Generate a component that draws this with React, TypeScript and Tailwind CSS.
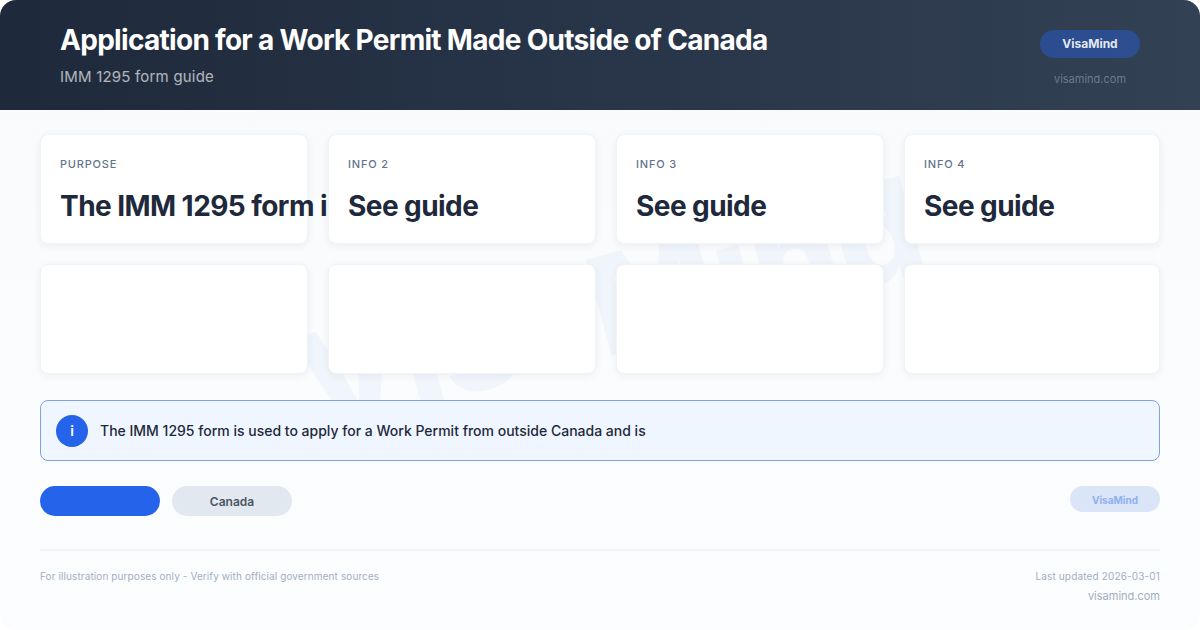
const infoCards = [
  { label: "PURPOSE", value: "The IMM 1295 form is used to apply for a Work Permit from outside Canada and is" },
  { label: "INFO 2", value: "See guide" },
  { label: "INFO 3", value: "See guide" },
  { label: "INFO 4", value: "See guide" },
];

export default function App() {
  return (
    <div className="relative h-[630px] w-[1200px] overflow-hidden rounded-2xl bg-gradient-to-b from-[#f8fafc] to-[#fbfdff] font-['Inter',sans-serif]">
      {/* watermark */}
      <div className="absolute left-[610px] top-[305px] -translate-x-1/2 -translate-y-1/2 -rotate-[15deg] whitespace-nowrap text-[136px] font-extrabold leading-none text-[#2563eb]/[0.04]">
        VisaMind
      </div>

      <header className="relative flex h-[110px] items-start justify-between bg-gradient-to-r from-[#1e293b] to-[#334155] px-[60px]">
        <div>
          <h1 className="mt-[22px] text-[28px] font-bold leading-[36px] tracking-[-0.7px] text-white">
            Application for a Work Permit Made Outside of Canada
          </h1>
          <p className="mt-[8px] text-[15px] leading-[22px] tracking-[0.2px] text-white/65">IMM 1295 form guide</p>
        </div>
        <div className="mt-[30px] flex w-[100px] flex-col items-center">
          <div className="flex h-7 w-[100px] items-center justify-center rounded-full bg-[#2563eb]/40 text-xs font-bold text-[#e2e8f0]">
            VisaMind
          </div>
          <div className="mt-[13px] text-[11px] leading-[16px] text-[#94a3b8]/60">visamind.com</div>
        </div>
      </header>

      <main className="relative flex flex-col px-10 pt-6">
        <div className="grid grid-cols-[268px_268px_268px_256px] gap-5">
          {infoCards.map((card) => (
            <div
              key={card.label}
              className="h-[110px] rounded-lg border border-[#f0f3f7] bg-white pl-[19px] pt-[21px] shadow-[0_2px_8px_rgba(15,23,42,0.06)]"
            >
              <div className="text-[11px] font-medium leading-4 tracking-[0.8px] text-[#64748b]">{card.label}</div>
              <div className="mt-[16px] w-[268px] overflow-hidden whitespace-nowrap text-[28px] font-bold leading-[36px] tracking-[-0.56px] text-[#1e293b]">
                {card.value}
              </div>
            </div>
          ))}
        </div>

        <div className="mt-5 grid grid-cols-[268px_268px_268px_256px] gap-5">
          {infoCards.map((card) => (
            <div
              key={card.label}
              className="h-[110px] rounded-lg border border-[#f0f3f7] bg-white shadow-[0_2px_8px_rgba(15,23,42,0.06)]"
            />
          ))}
        </div>

        <div className="mt-[26px] flex h-[61px] items-center gap-3 rounded-lg border-[1.5px] border-[#7ea3e0] bg-[#eff6ff] pl-[15px]">
          <div className="flex h-8 w-8 items-center justify-center rounded-full bg-[#2563eb] text-sm font-semibold text-white">
            i
          </div>
          <div className="text-sm font-medium text-[#1e293b]">
            The IMM 1295 form is used to apply for a Work Permit from outside Canada and is
          </div>
        </div>

        <div className="mt-[25px] flex items-start gap-3">
          <div className="h-[30px] w-[120px] rounded-full bg-[#2563eb]" />
          <div className="flex h-[30px] w-[120px] items-center justify-center rounded-full bg-[#e2e8f0] pt-[2px] text-xs font-semibold text-[#4b5563]">
            Canada
          </div>
          <div className="ml-auto flex h-[26px] w-[90px] items-center justify-center rounded-full bg-[#dbe5f8] pt-[2px] text-[10px] font-bold text-[#8fb0ef]">
            VisaMind
          </div>
        </div>

        <div className="mt-[33px] h-0.5 bg-[#f1f5f9]" />

        <div className="mt-[17px] flex items-start justify-between text-[10px] leading-[14px] text-[#a3afc0]">
          <div className="mt-[1px] tracking-[0.1px]">For illustration purposes only - Verify with official government sources</div>
          <div className="flex flex-col items-end gap-[6px]">
            <div className="mt-[1px] tracking-[0.15px]">Last updated 2026-03-01</div>
            <div className="text-[11px]">visamind.com</div>
          </div>
        </div>
      </main>
    </div>
  );
}
